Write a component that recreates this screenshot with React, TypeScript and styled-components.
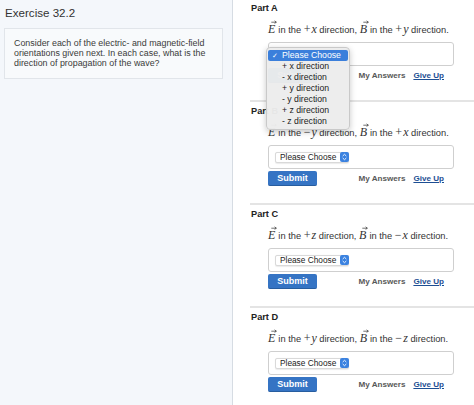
import React from "react";
import styled, { createGlobalStyle } from "styled-components";

const GlobalStyle = createGlobalStyle`
  html, body {
    margin: 0;
    padding: 0;
    background: #ffffff;
  }
  body {
    font-family: "Liberation Sans", Arial, Helvetica, sans-serif;
    color: #333333;
  }
`;

const Page = styled.div`
  display: grid;
  grid-template-columns: 233px 1fr;
  width: 474px;
  height: 405px;
  overflow: hidden;
`;

const LeftPanel = styled.aside`
  background: #f4f7fb;
  border-right: 1px solid #d6dce3;
  padding: 6px 9px 0 4px;
`;

const Title = styled.h1`
  margin: 0;
  font-size: 11.6px;
  line-height: 14px;
  font-weight: normal;
  color: #333333;
  padding-left: 1px;
`;

const Description = styled.div`
  margin-top: 8px;
  background: #f8fafc;
  border: 1px solid #e1e5ea;
  padding: 9px 8px 10px 9px;
  font-size: 8.9px;
  line-height: 10px;
  color: #3a3a3a;
`;

const Main = styled.main`
  padding-left: 17px;
  display: flex;
  flex-direction: column;
`;

const Section = styled.section<{ first?: boolean }>`
  border-top: ${(p) => (p.first ? "none" : "2px solid #e4e4e4")};
  padding-top: ${(p) => (p.first ? "3px" : "4px")};
  padding-bottom: 17px;
`;

const PartLabel = styled.div`
  font-size: 9.2px;
  line-height: 11px;
  font-weight: bold;
  color: #222222;
  padding-left: 1px;
`;

const Formula = styled.div`
  margin-top: 8px;
  margin-left: 18px;
  height: 14px;
  line-height: 14px;
  font-size: 9.3px;
  color: #333333;
  white-space: nowrap;
`;

const MathVar = styled.span`
  font-family: "Liberation Serif", "Times New Roman", serif;
  font-style: italic;
  font-size: 12px;
`;

const MathOp = styled.span`
  font-family: "Liberation Serif", "Times New Roman", serif;
  font-size: 12px;
  margin-right: 1px;
`;

const VecWrap = styled.span`
  position: relative;
  display: inline-block;
  font-family: "Liberation Serif", "Times New Roman", serif;
  font-style: italic;
  font-size: 12px;
  margin-right: 3px;
`;

const VecArrow = styled.svg`
  position: absolute;
  top: -2px;
  left: 3px;
  width: 6px;
  height: 4px;
`;

const AnswerBox = styled.div`
  position: relative;
  margin: 6px 0 0 18px;
  width: 186px;
  height: 24px;
  box-sizing: border-box;
  border: 1px solid #cfcfcf;
  border-radius: 3px;
  background: #ffffff;
  display: flex;
  align-items: center;
  padding-left: 6px;
`;

const Select = styled.div`
  display: flex;
  align-items: center;
  justify-content: space-between;
  width: 74px;
  height: 11px;
  box-sizing: border-box;
  border: 1px solid #d9d9d9;
  border-radius: 2px;
  background: #ffffff;
  padding-left: 4px;
  font-size: 8.3px;
  color: #222222;
  white-space: nowrap;
  box-shadow: 0 0.5px 1px rgba(0, 0, 0, 0.08);
`;

const Stepper = styled.svg`
  width: 9px;
  height: 10px;
  margin-right: -1px;
  flex-shrink: 0;
`;

const Dropdown = styled.ul`
  position: absolute;
  left: -3px;
  top: 4px;
  width: 82px;
  margin: 0;
  padding: 2px 0 2px;
  list-style: none;
  background: rgba(236, 236, 236, 0.97);
  border: 1px solid #c9c9c9;
  border-radius: 4px;
  box-shadow: 0 2px 6px rgba(0, 0, 0, 0.22);
  z-index: 5;
`;

const Option = styled.li<{ active?: boolean }>`
  height: 11px;
  line-height: 11px;
  font-size: 8.7px;
  padding-left: ${(p) => (p.active ? "4px" : "14px")};
  margin: 0 1px;
  border-radius: 2px;
  color: ${(p) => (p.active ? "#ffffff" : "#222222")};
  background: ${(p) => (p.active ? "#3b7fdb" : "transparent")};
  white-space: nowrap;
  overflow: hidden;
`;

const Check = styled.span`
  display: inline-block;
  width: 10px;
  font-family: "DejaVu Sans", sans-serif;
  font-size: 7px;
`;

const ActionRow = styled.div`
  margin: 2px 0 0 18px;
  width: 186px;
  height: 15px;
  display: flex;
  align-items: center;
`;

const SubmitButton = styled.button`
  width: 49px;
  height: 15px;
  padding: 0;
  border: none;
  border-radius: 2px;
  background: #3574c4;
  border-bottom: 1px solid #275d9f;
  color: #ffffff;
  font-family: "Liberation Sans", Arial, sans-serif;
  font-weight: bold;
  font-size: 9px;
`;

const Links = styled.div`
  margin-left: auto;
  padding-right: 10px;
  display: flex;
  gap: 8px;
  font-size: 8.1px;
  font-weight: bold;
`;

const MyAnswers = styled.span`
  color: #585858;
`;

const GiveUp = styled.a`
  color: #1d4e93;
  text-decoration: underline;
`;

const Arrow = () => (
  <VecArrow viewBox="0 0 6 4">
    <path d="M0.3 2.2 H5.2 M3.6 0.8 L5.4 2.2 L3.6 3.4" stroke="#333" strokeWidth="0.7" fill="none" />
  </VecArrow>
);

const Vec = ({ children }: { children: string }) => (
  <VecWrap>
    {children}
    <Arrow />
  </VecWrap>
);

const Dir = ({ sign, axis }: { sign: string; axis: string }) => (
  <>
    <MathOp>{sign}</MathOp>
    <MathVar>{axis}</MathVar>
  </>
);

type Part = {
  label: string;
  e: [string, string];
  b: [string, string];
  open?: boolean;
};

const parts: Part[] = [
  { label: "Part A", e: ["+", "x"], b: ["+", "y"], open: true },
  { label: "Part B", e: ["\u2212", "y"], b: ["+", "x"] },
  { label: "Part C", e: ["+", "z"], b: ["\u2212", "x"] },
  { label: "Part D", e: ["+", "y"], b: ["\u2212", "z"] },
];

const options = [
  "+ x direction",
  "- x direction",
  "+ y direction",
  "- y direction",
  "+ z direction",
  "- z direction",
];

const SelectControl = () => (
  <Select>
    Please Choose
    <Stepper viewBox="0 0 9 10">
      <rect x="0" y="0" width="9" height="10" rx="2" fill="#3b82e0" />
      <path d="M2.7 4 L4.5 2.3 L6.3 4 M2.7 6 L4.5 7.7 L6.3 6" stroke="#fff" strokeWidth="0.9" fill="none" />
    </Stepper>
  </Select>
);

export default function App() {
  return (
    <>
      <GlobalStyle />
      <Page>
        <LeftPanel>
          <Title>Exercise 32.2</Title>
          <Description>
            Consider each of the electric- and magnetic-field orientations given next. In each case, what is the
            direction of propagation of the wave?
          </Description>
        </LeftPanel>
        <Main>
          {parts.map((part, i) => (
            <Section key={part.label} first={i === 0}>
              <PartLabel>{part.label}</PartLabel>
              <Formula>
                <Vec>E</Vec>in the <Dir sign={part.e[0]} axis={part.e[1]} /> direction,{" "}
                <Vec>B</Vec>in the <Dir sign={part.b[0]} axis={part.b[1]} /> direction.
              </Formula>
              <AnswerBox>
                <SelectControl />
                {part.open ? (
                  <Dropdown>
                    <Option active>
                      <Check>✓</Check>Please Choose
                    </Option>
                    {options.map((o) => (
                      <Option key={o}>{o}</Option>
                    ))}
                  </Dropdown>
                ) : null}
              </AnswerBox>
              <ActionRow>
                <SubmitButton>Submit</SubmitButton>
                <Links>
                  <MyAnswers>My Answers</MyAnswers>
                  <GiveUp>Give Up</GiveUp>
                </Links>
              </ActionRow>
            </Section>
          ))}
        </Main>
      </Page>
    </>
  );
}
